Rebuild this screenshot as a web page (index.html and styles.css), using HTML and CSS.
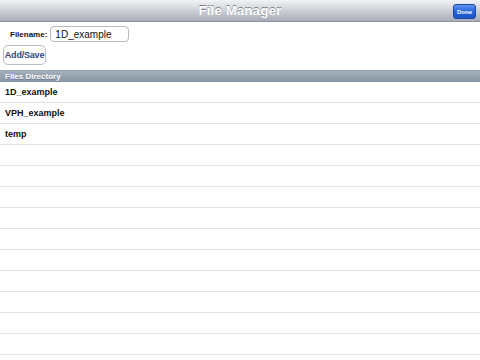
FILE: index.html
```html
<!DOCTYPE html>
<html lang="en">

<head>
    <meta charset="UTF-8">
    <meta name="viewport" content="width=device-width, initial-scale=1.0">
    <title>File Manager</title>
    <link rel="stylesheet" href="styles.css">
</head>

<body>
    <div class="navbar">
        <span class="title">File Manager</span>
        <button class="done">Done</button>
    </div>
    <div class="form">
        <div class="field">
            <label for="fname">Filename:</label>
            <input id="fname" type="text" value="1D_example">
        </div>
        <button class="save">Add/Save</button>
    </div>
    <div class="section">Files Directory</div>
    <ul class="files">
        <li>1D_example</li>
        <li>VPH_example</li>
        <li>temp</li>
        <li></li>
        <li></li>
        <li></li>
        <li></li>
        <li></li>
        <li></li>
        <li></li>
        <li></li>
        <li></li>
        <li></li>
    </ul>
</body>

</html>
```

FILE: styles.css
```css
body {
    margin: 0;
    width: 480px;
    height: 360px;
    overflow: hidden;
    background-color: #fff;
    font-family: "Liberation Sans", Arial, sans-serif;
}

.navbar {
    height: 22px;
    display: flex;
    align-items: center;
    justify-content: center;
    position: relative;
    background: linear-gradient(#f2f3f6, #c9ccd3 55%, #a9adb7);
    border-bottom: 1px solid #8d929c;
    box-sizing: border-box;
}

.title {
    color: #fff;
    font-size: 13px;
    font-weight: bold;
    text-shadow: 0 -1px 0 #7b808a;
    letter-spacing: 0.3px;
}

.done {
    position: absolute;
    right: 4px;
    top: 4px;
    width: 23px;
    height: 15px;
    padding: 0;
    border: 1px solid #1c48a0;
    border-radius: 3px;
    background: linear-gradient(#5f95f0, #2463d8 50%, #1a55c8);
    color: #fff;
    font-family: "Liberation Sans", Arial, sans-serif;
    font-size: 6px;
    font-weight: bold;
}

.form {
    padding: 4px 3px 5px;
    display: flex;
    flex-direction: column;
    gap: 3px;
}

.field {
    display: flex;
    align-items: center;
    gap: 3px;
    padding-left: 7px;
}

.field label {
    font-size: 8px;
    font-weight: bold;
    color: #111;
}

.field input {
    width: 79px;
    height: 16px;
    box-sizing: border-box;
    border: 1px solid #b9b9b9;
    border-radius: 4px;
    padding: 0 4px;
    font-family: "Liberation Sans", Arial, sans-serif;
    font-size: 10px;
    color: #111;
}

.save {
    width: 43px;
    height: 20px;
    padding: 0;
    border: 1px solid #b9bcc4;
    border-radius: 5px;
    background: #fff;
    color: #2f4a86;
    font-family: "Liberation Sans", Arial, sans-serif;
    font-size: 9px;
    font-weight: bold;
    letter-spacing: -0.2px;
}

.section {
    height: 11px;
    line-height: 11px;
    padding-left: 5px;
    background: linear-gradient(#a4afbc, #8995a4);
    border-top: 1px solid #9aa4b0;
    color: #fff;
    font-size: 8px;
    font-weight: bold;
    text-shadow: 0 1px 0 #6f7987;
}

.files {
    list-style: none;
    margin: 0;
    padding: 0;
}

.files li {
    height: 21px;
    line-height: 21px;
    padding-left: 5px;
    border-bottom: 1px solid #e2e2e2;
    box-sizing: border-box;
    font-size: 9px;
    font-weight: bold;
    color: #111;
}
```
